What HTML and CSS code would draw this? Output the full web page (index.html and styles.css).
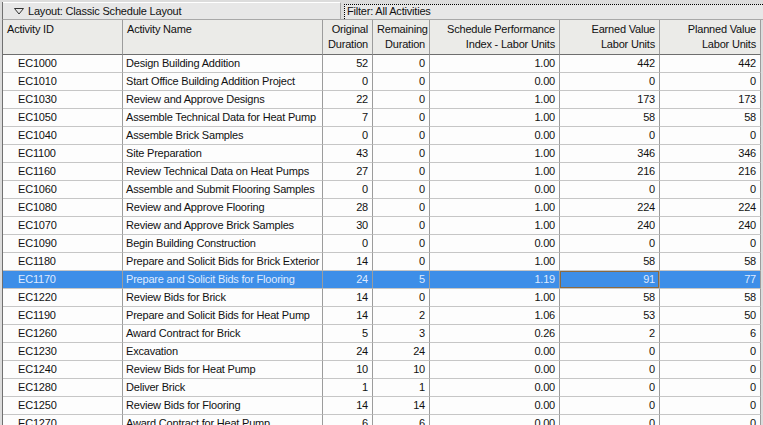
FILE: index.html
```html
<!DOCTYPE html>
<html lang="en">
<head>
    <meta charset="UTF-8">
    <title>Activities - Classic Schedule Layout</title>
    <link rel="stylesheet" href="styles.css">
</head>
<body>
    <div class="frame">
        <div class="toolbar">
            <div class="layout-bar">
                <svg class="chevron" width="10" height="7" viewBox="0 0 10 7"><path d="M0.5 0.5 H9.5 L5 6 Z" fill="none" stroke="#333" stroke-width="1" stroke-linejoin="round"/></svg>
                <span>Layout: Classic Schedule Layout</span>
            </div>
            <div class="filter-box">Filter: All Activities</div>
        </div>
        <table class="grid">
            <colgroup>
                <col style="width:120px">
                <col style="width:200px">
                <col style="width:50px">
                <col style="width:57px">
                <col style="width:130px">
                <col style="width:100px">
                <col style="width:101px">
            </colgroup>
            <thead>
                <tr>
                    <th class="left">Activity ID</th>
                    <th class="left">Activity Name</th>
                    <th>Original<br>Duration</th>
                    <th>Remaining<br>Duration</th>
                    <th>Schedule Performance<br>Index - Labor Units</th>
                    <th>Earned Value<br>Labor Units</th>
                    <th>Planned Value<br>Labor Units</th>
                </tr>
            </thead>
            <tbody>
                <tr><td class="id">EC1000</td><td class="name">Design Building Addition</td><td>52</td><td>0</td><td>1.00</td><td>442</td><td>442</td></tr>
                <tr><td class="id">EC1010</td><td class="name">Start Office Building Addition Project</td><td>0</td><td>0</td><td>0.00</td><td>0</td><td>0</td></tr>
                <tr><td class="id">EC1030</td><td class="name">Review and Approve Designs</td><td>22</td><td>0</td><td>1.00</td><td>173</td><td>173</td></tr>
                <tr><td class="id">EC1050</td><td class="name">Assemble Technical Data for Heat Pump</td><td>7</td><td>0</td><td>1.00</td><td>58</td><td>58</td></tr>
                <tr><td class="id">EC1040</td><td class="name">Assemble Brick Samples</td><td>0</td><td>0</td><td>0.00</td><td>0</td><td>0</td></tr>
                <tr><td class="id">EC1100</td><td class="name">Site Preparation</td><td>43</td><td>0</td><td>1.00</td><td>346</td><td>346</td></tr>
                <tr><td class="id">EC1160</td><td class="name">Review Technical Data on Heat Pumps</td><td>27</td><td>0</td><td>1.00</td><td>216</td><td>216</td></tr>
                <tr><td class="id">EC1060</td><td class="name">Assemble and Submit Flooring Samples</td><td>0</td><td>0</td><td>0.00</td><td>0</td><td>0</td></tr>
                <tr><td class="id">EC1080</td><td class="name">Review and Approve Flooring</td><td>28</td><td>0</td><td>1.00</td><td>224</td><td>224</td></tr>
                <tr><td class="id">EC1070</td><td class="name">Review and Approve Brick Samples</td><td>30</td><td>0</td><td>1.00</td><td>240</td><td>240</td></tr>
                <tr><td class="id">EC1090</td><td class="name">Begin Building Construction</td><td>0</td><td>0</td><td>0.00</td><td>0</td><td>0</td></tr>
                <tr><td class="id">EC1180</td><td class="name">Prepare and Solicit Bids for Brick Exterior</td><td>14</td><td>0</td><td>1.00</td><td>58</td><td>58</td></tr>
                <tr class="selected"><td class="id">EC1170</td><td class="name">Prepare and Solicit Bids for Flooring</td><td>24</td><td>5</td><td>1.19</td><td class="focus">91</td><td>77</td></tr>
                <tr><td class="id">EC1220</td><td class="name">Review Bids for Brick</td><td>14</td><td>0</td><td>1.00</td><td>58</td><td>58</td></tr>
                <tr><td class="id">EC1190</td><td class="name">Prepare and Solicit Bids for Heat Pump</td><td>14</td><td>2</td><td>1.06</td><td>53</td><td>50</td></tr>
                <tr><td class="id">EC1260</td><td class="name">Award Contract for Brick</td><td>5</td><td>3</td><td>0.26</td><td>2</td><td>6</td></tr>
                <tr><td class="id">EC1230</td><td class="name">Excavation</td><td>24</td><td>24</td><td>0.00</td><td>0</td><td>0</td></tr>
                <tr><td class="id">EC1240</td><td class="name">Review Bids for Heat Pump</td><td>10</td><td>10</td><td>0.00</td><td>0</td><td>0</td></tr>
                <tr><td class="id">EC1280</td><td class="name">Deliver Brick</td><td>1</td><td>1</td><td>0.00</td><td>0</td><td>0</td></tr>
                <tr><td class="id">EC1250</td><td class="name">Review Bids for Flooring</td><td>14</td><td>14</td><td>0.00</td><td>0</td><td>0</td></tr>
                <tr><td class="id">EC1270</td><td class="name">Award Contract for Heat Pump</td><td>6</td><td>6</td><td>0.00</td><td>0</td><td>0</td></tr>
            </tbody>
        </table>
    </div>
</body>
</html>
```

FILE: styles.css
```css
body {
    margin: 0;
    background-color: #dcdcdc;
    font-family: 'Liberation Sans', Arial, sans-serif;
    font-size: 11px;
    letter-spacing: -0.2px;
    color: #111;
    height: 425px;
    overflow: hidden;
}
.frame {
    width: 763px;
    padding: 2px 0 0 2px;
    box-sizing: border-box;
}
.toolbar {
    display: flex;
    height: 17px;
    border-bottom: 1px solid #a8a8a8;
    border-left: 1px solid #707070;
}
.layout-bar {
    width: 338px;
    display: flex;
    align-items: center;
    gap: 4px;
    padding-left: 11px;
    box-sizing: border-box;
    background-color: #e7e7e7;
    border-top: 1px solid #fff;
    border-right: 1px solid #a8a8a8;
}
.chevron {
    margin-top: 1px;
}
.filter-box {
    flex: 1;
    margin: 2px 0 0 3px;
    padding-left: 2px;
    line-height: 13px;
    background-color: #e7e7e7;
    border: 1px dotted #000;
    border-right: none;
    border-bottom: none;
}
.grid {
    border-collapse: separate;
    border-spacing: 0;
    table-layout: fixed;
    width: 759px;
    border-left: 1px solid #707070;
}
.grid th,
.grid td {
    box-sizing: border-box;
    border-right: 1px solid #9c9c9c;
    white-space: nowrap;
    overflow: hidden;
    text-align: right;
}
.grid th {
    height: 35px;
    padding: 2px 4px 0 4px;
    vertical-align: top;
    line-height: 15px;
    font-weight: normal;
    background-color: #ebebe8;
    border-bottom: 1px solid #6e6e6e;
}
.grid th.left {
    text-align: left;
}
.grid td {
    height: 18px;
    padding: 0 4px 0 4px;
    line-height: 17px;
    background-color: #fdfdfd;
    border-bottom: 1px solid #c6c6c6;
}
.grid td.id {
    text-align: left;
    padding-left: 15px;
}
.grid td.name {
    text-align: left;
    padding-left: 3px;
    text-overflow: clip;
}
.selected td {
    background-color: #3d8ee8;
    color: #dfeaff;
}
.selected td.focus {
    box-shadow: inset 0 0 0 1px #8a6a42;
}
```
